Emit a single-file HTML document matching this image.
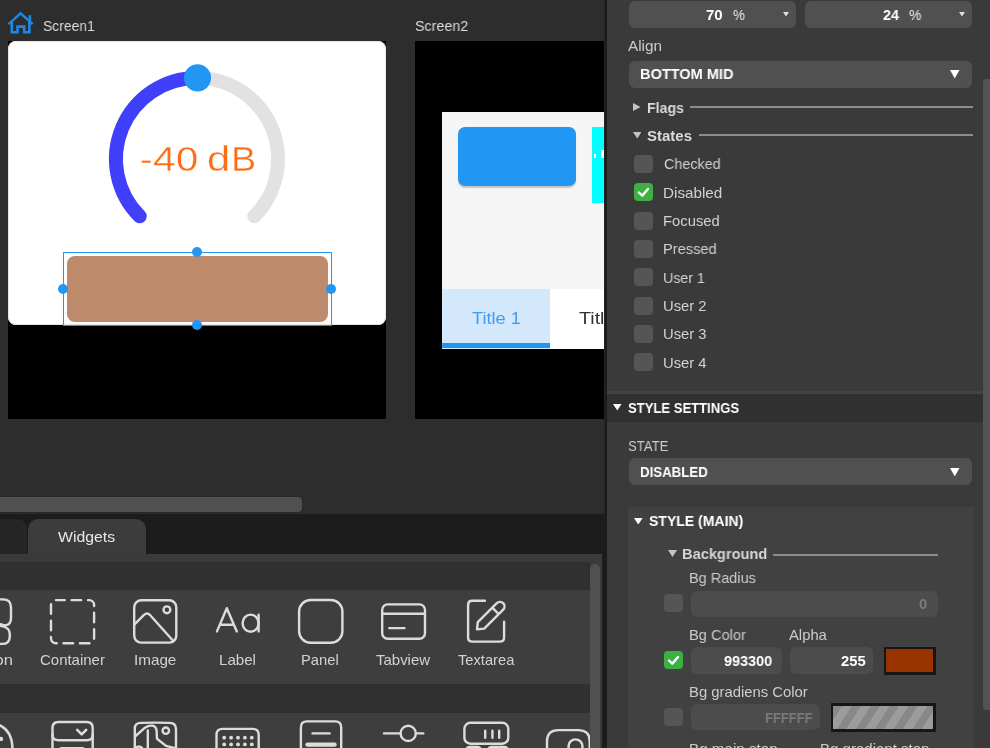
<!DOCTYPE html><html><head><meta charset="utf-8"><style>
html,body{margin:0;padding:0;} *{-webkit-font-smoothing:antialiased;}
body{width:990px;height:748px;overflow:hidden;position:relative;background:#2d2d2d;font-family:'Liberation Sans', sans-serif;} body>div{will-change:transform;}
</style></head><body>
<div style="position:absolute;left:0px;top:0px;width:604px;height:514px;background:#2d2d2d;"></div>
<svg style="position:absolute;left:0;top:0" width="60" height="40"><path d="M9.4 23.4 L20.6 13.4 L31.8 23.4" fill="none" stroke="#1e88e5" stroke-width="2.4" stroke-linecap="square" stroke-linejoin="miter"/><path d="M11.8 21 V32.2 H17.5 V26.6 H24.2 V32.2 H29.4 V21" fill="none" stroke="#1e88e5" stroke-width="2.6" stroke-linecap="butt" stroke-linejoin="miter"/><path d="M29.9 15.2 V21.5" fill="none" stroke="#1e88e5" stroke-width="2.6"/></svg>
<div style="position:absolute;left:43.01px;top:16.47px;line-height:20px;font-size:14.8px;font-weight:400;color:#dcdcdc;white-space:pre;transform:scaleX(0.9380);transform-origin:0 0;">Screen1</div>
<div style="position:absolute;left:415.20px;top:16.37px;line-height:20px;font-size:14.8px;font-weight:400;color:#dcdcdc;white-space:pre;transform:scaleX(0.9641);transform-origin:0 0;">Screen2</div>
<div style="position:absolute;left:8px;top:41px;width:378px;height:378px;background:#000;"></div>
<div style="position:absolute;left:8px;top:41px;width:378px;height:283.5px;background:#fff;border-radius:8px;box-shadow:inset 0 0 0 1px #e4e4e4;"></div>
<svg style="position:absolute;left:0;top:0" width="400" height="330">
<path d="M139.7 216.3 A81 81 0 1 1 254.3 216.3" fill="none" stroke="#e3e1e3" stroke-width="14" stroke-linecap="round"/>
<path d="M139.7 216.3 A81 81 0 0 1 197 78" fill="none" stroke="#4040fa" stroke-width="14" stroke-linecap="round"/>
<circle cx="197.5" cy="77.8" r="13.6" fill="#2196f3"/>
</svg>
<div style="position:absolute;left:140.17px;top:148.67px;line-height:20px;font-size:35px;font-weight:400;color:#ff6c14;white-space:pre;transform:scaleX(1.0899);transform-origin:0 0;-webkit-text-stroke:0.35px #ffffff;">-</div>
<div style="position:absolute;left:153.32px;top:148.67px;line-height:20px;font-size:35px;font-weight:400;color:#ff6c14;white-space:pre;transform:scaleX(1.1718);transform-origin:0 0;-webkit-text-stroke:0.35px #ffffff;">4</div>
<div style="position:absolute;left:175.73px;top:148.67px;line-height:20px;font-size:35px;font-weight:400;color:#ff6c14;white-space:pre;transform:scaleX(1.1403);transform-origin:0 0;-webkit-text-stroke:0.35px #ffffff;">0</div>
<div style="position:absolute;left:207.02px;top:148.67px;line-height:20px;font-size:35px;font-weight:400;color:#ff6c14;white-space:pre;transform:scaleX(1.1873);transform-origin:0 0;-webkit-text-stroke:0.35px #ffffff;">d</div>
<div style="position:absolute;left:230.60px;top:148.67px;line-height:20px;font-size:35px;font-weight:400;color:#ff6c14;white-space:pre;transform:scaleX(1.0792);transform-origin:0 0;-webkit-text-stroke:0.35px #ffffff;">B</div>
<div style="position:absolute;left:67px;top:256px;width:261px;height:66.30000000000001px;background:#be8a6c;border-radius:8px;"></div>
<div style="position:absolute;left:62.9px;top:251.7px;width:269.3px;height:74.30000000000001px;background:transparent;box-sizing:border-box;border:1.7px solid #2196f3;"></div>
<div style="position:absolute;left:192px;top:247.4px;width:10px;height:9.999999999999972px;background:#2196f3;border-radius:50%;"></div>
<div style="position:absolute;left:58.3px;top:284.2px;width:10.0px;height:10.0px;background:#2196f3;border-radius:50%;"></div>
<div style="position:absolute;left:326.1px;top:284.2px;width:10.0px;height:10.0px;background:#2196f3;border-radius:50%;"></div>
<div style="position:absolute;left:192px;top:320.3px;width:10px;height:10.0px;background:#2196f3;border-radius:50%;"></div>
<div style="position:absolute;left:415px;top:41px;width:189px;height:378px;background:#000;"></div>
<div style="position:absolute;left:442.4px;top:111.8px;width:161.60000000000002px;height:236.39999999999998px;background:#f5f5f5;"></div>
<div style="position:absolute;left:458.2px;top:127px;width:118.19999999999999px;height:58.80000000000001px;background:#2196f3;border-radius:7px;box-shadow:0 1.5px 1px #c8c8c8;"></div>
<div style="position:absolute;left:591.5px;top:127px;width:12.5px;height:75.69999999999999px;background:#00ffff;"></div>
<div style="position:absolute;left:594px;top:154px;width:2px;height:4px;background:#fff;"></div>
<div style="position:absolute;left:600.5px;top:150px;width:2.5px;height:8px;background:#fff;"></div>
<div style="position:absolute;left:442.4px;top:288.7px;width:107.60000000000002px;height:59.5px;background:#d4e8fc;"></div>
<div style="position:absolute;left:550px;top:288.7px;width:54px;height:59.5px;background:#ffffff;"></div>
<div style="position:absolute;left:442.4px;top:343.3px;width:107.60000000000002px;height:4.899999999999977px;background:#2196f3;"></div>
<div style="position:absolute;left:471.60px;top:308.61px;line-height:20px;font-size:17px;font-weight:400;color:#3d9cf0;white-space:pre;transform:scaleX(1.0674);transform-origin:0 0;">Title 1</div>
<div style="position:absolute;left:578.57px;top:308.61px;line-height:20px;font-size:17px;font-weight:400;color:#333333;white-space:pre;transform:scaleX(1.1561);transform-origin:0 0;">Titl</div>
<div style="position:absolute;left:0px;top:497px;width:302px;height:14.75px;background:#505050;border-radius:0 4px 4px 0;box-shadow:0 0 0 1px #272727;"></div>
<div style="position:absolute;left:604px;top:0px;width:3px;height:748px;background:#1c1c1c;background:linear-gradient(90deg,#242424 0,#242424 1px,#1c1c1c 1px);"></div>
<div style="position:absolute;left:0px;top:514px;width:604.5px;height:234px;background:#1c1c1c;"></div>
<div style="position:absolute;left:0px;top:519px;width:27px;height:34.60000000000002px;background:#262626;border-radius:0 10px 0 0;"></div>
<div style="position:absolute;left:28px;top:519px;width:118px;height:34.60000000000002px;background:#3c3c3c;border-radius:10px 10px 0 0;"></div>
<div style="position:absolute;left:58.37px;top:527.07px;line-height:20px;font-size:14.8px;font-weight:400;color:#e8e8e8;white-space:pre;transform:scaleX(1.0679);transform-origin:0 0;">Widgets</div>
<div style="position:absolute;left:0px;top:553.6px;width:602px;height:194.39999999999998px;background:#3a3a3a;"></div>
<div style="position:absolute;left:0px;top:562px;width:590px;height:28px;background:#303030;"></div>
<div style="position:absolute;left:0px;top:590px;width:590px;height:94px;background:#3e3e3e;"></div>
<div style="position:absolute;left:0px;top:684px;width:590px;height:28.700000000000045px;background:#303030;"></div>
<div style="position:absolute;left:0px;top:712.7px;width:590px;height:35.299999999999955px;background:#3e3e3e;"></div>
<div style="position:absolute;left:590px;top:564px;width:10.200000000000045px;height:184px;background:#505050;border-radius:5px 5px 0 0;"></div>
<div style="position:absolute;left:607px;top:0px;width:383px;height:748px;background:#3a3a3a;"></div>
<div style="position:absolute;left:983px;top:78.7px;width:13px;height:630.8px;background:#535353;border-radius:3px;"></div>
<div style="position:absolute;left:629px;top:1.2px;width:167px;height:26.8px;background:#505050;border-radius:6px;"></div>
<div style="position:absolute;left:805px;top:1.2px;width:167px;height:26.8px;background:#505050;border-radius:6px;"></div>
<div style="position:absolute;left:706.36px;top:5.47px;line-height:20px;font-size:14.8px;font-weight:700;color:#ffffff;white-space:pre;transform:scaleX(1.0164);transform-origin:0 0;">70</div>
<div style="position:absolute;left:733.15px;top:5.47px;line-height:20px;font-size:14.8px;font-weight:400;color:#ececec;white-space:pre;transform:scaleX(0.8990);transform-origin:0 0;">%</div>
<svg style="position:absolute;left:782.5px;top:12px" width="6.0" height="4.5"><path d="M0 0 H6.0 L3.0 4.5 Z" fill="#e0e0e0"/></svg>
<div style="position:absolute;left:883.11px;top:5.47px;line-height:20px;font-size:14.8px;font-weight:700;color:#ffffff;white-space:pre;transform:scaleX(0.9701);transform-origin:0 0;">24</div>
<div style="position:absolute;left:909.13px;top:5.47px;line-height:20px;font-size:14.8px;font-weight:400;color:#ececec;white-space:pre;transform:scaleX(0.9402);transform-origin:0 0;">%</div>
<svg style="position:absolute;left:958.5px;top:12px" width="6.0" height="4.5"><path d="M0 0 H6.0 L3.0 4.5 Z" fill="#e0e0e0"/></svg>
<div style="position:absolute;left:628.00px;top:35.77px;line-height:20px;font-size:14.8px;font-weight:400;color:#cccccc;white-space:pre;transform:scaleX(1.0353);transform-origin:0 0;">Align</div>
<div style="position:absolute;left:629px;top:60.5px;width:343px;height:26.5px;background:#505050;border-radius:6px;"></div>
<div style="position:absolute;left:639.82px;top:64.07px;line-height:20px;font-size:14.8px;font-weight:700;color:#ffffff;white-space:pre;transform:scaleX(0.9826);transform-origin:0 0;">BOTTOM MID</div>
<svg style="position:absolute;left:950px;top:70px" width="9.5" height="8.5"><path d="M0 0 H9.5 L4.75 8.5 Z" fill="#ffffff"/></svg>
<svg style="position:absolute;left:633px;top:103px" width="7.5" height="8"><path d="M0 0 L7.5 4.0 L0 8 Z" fill="#c4c4c4"/></svg>
<div style="position:absolute;left:646.65px;top:97.57px;line-height:20px;font-size:14.8px;font-weight:700;color:#dadada;white-space:pre;transform:scaleX(0.9541);transform-origin:0 0;">Flags</div>
<div style="position:absolute;left:690px;top:106px;width:283px;height:1.5999999999999943px;background:#8c8c8c;"></div>
<svg style="position:absolute;left:632.5px;top:132px" width="8.5" height="6.5"><path d="M0 0 H8.5 L4.25 6.5 Z" fill="#c4c4c4"/></svg>
<div style="position:absolute;left:647.09px;top:125.67px;line-height:20px;font-size:14.8px;font-weight:700;color:#dadada;white-space:pre;transform:scaleX(1.0127);transform-origin:0 0;">States</div>
<div style="position:absolute;left:699px;top:134.2px;width:274px;height:1.6000000000000227px;background:#8c8c8c;"></div>
<div style="position:absolute;left:634px;top:154.8px;width:19px;height:18.0px;background:#555555;border-radius:4px;"></div>
<div style="position:absolute;left:663.57px;top:154.27px;line-height:20px;font-size:14.8px;font-weight:400;color:#d2d2d2;white-space:pre;transform:scaleX(0.9681);transform-origin:0 0;">Checked</div>
<div style="position:absolute;left:634px;top:183.16000000000003px;width:19px;height:18.0px;background:#3cb043;border-radius:4px;"></div>
<svg style="position:absolute;left:634px;top:183.16000000000003px" width="19" height="18"><path d="M5 9.5 L8.3 12.6 L14 6" fill="none" stroke="#fff" stroke-width="2.4" stroke-linecap="round" stroke-linejoin="round"/></svg>
<div style="position:absolute;left:663.01px;top:182.63px;line-height:20px;font-size:14.8px;font-weight:400;color:#d2d2d2;white-space:pre;transform:scaleX(1.0299);transform-origin:0 0;">Disabled</div>
<div style="position:absolute;left:634px;top:211.52px;width:19px;height:18.0px;background:#555555;border-radius:4px;"></div>
<div style="position:absolute;left:663.06px;top:210.99px;line-height:20px;font-size:14.8px;font-weight:400;color:#d2d2d2;white-space:pre;transform:scaleX(0.9913);transform-origin:0 0;">Focused</div>
<div style="position:absolute;left:634px;top:239.88px;width:19px;height:18.0px;background:#555555;border-radius:4px;"></div>
<div style="position:absolute;left:663.06px;top:239.35px;line-height:20px;font-size:14.8px;font-weight:400;color:#d2d2d2;white-space:pre;transform:scaleX(0.9889);transform-origin:0 0;">Pressed</div>
<div style="position:absolute;left:634px;top:268.24px;width:19px;height:18.0px;background:#555555;border-radius:4px;"></div>
<div style="position:absolute;left:663.22px;top:267.71px;line-height:20px;font-size:14.8px;font-weight:400;color:#d2d2d2;white-space:pre;transform:scaleX(0.9610);transform-origin:0 0;">User 1</div>
<div style="position:absolute;left:634px;top:296.6px;width:19px;height:18.0px;background:#555555;border-radius:4px;"></div>
<div style="position:absolute;left:663.18px;top:296.07px;line-height:20px;font-size:14.8px;font-weight:400;color:#d2d2d2;white-space:pre;transform:scaleX(0.9946);transform-origin:0 0;">User 2</div>
<div style="position:absolute;left:634px;top:324.96000000000004px;width:19px;height:18.0px;background:#555555;border-radius:4px;"></div>
<div style="position:absolute;left:663.18px;top:324.43px;line-height:20px;font-size:14.8px;font-weight:400;color:#d2d2d2;white-space:pre;transform:scaleX(0.9916);transform-origin:0 0;">User 3</div>
<div style="position:absolute;left:634px;top:353.32px;width:19px;height:18.0px;background:#555555;border-radius:4px;"></div>
<div style="position:absolute;left:663.18px;top:352.79px;line-height:20px;font-size:14.8px;font-weight:400;color:#d2d2d2;white-space:pre;transform:scaleX(0.9958);transform-origin:0 0;">User 4</div>
<div style="position:absolute;left:607px;top:390.8px;width:376px;height:3.0px;background:#434343;"></div>
<div style="position:absolute;left:607px;top:393.8px;width:376px;height:27.899999999999977px;background:#303030;"></div>
<svg style="position:absolute;left:613px;top:404px" width="8.5" height="6.5"><path d="M0 0 H8.5 L4.25 6.5 Z" fill="#ffffff"/></svg>
<div style="position:absolute;left:628.36px;top:397.97px;line-height:20px;font-size:14.8px;font-weight:700;color:#ffffff;white-space:pre;transform:scaleX(0.8829);transform-origin:0 0;">STYLE SETTINGS</div>
<div style="position:absolute;left:628.24px;top:435.97px;line-height:20px;font-size:14.8px;font-weight:400;color:#cccccc;white-space:pre;transform:scaleX(0.8907);transform-origin:0 0;">STATE</div>
<div style="position:absolute;left:629px;top:458px;width:343px;height:26.5px;background:#505050;border-radius:6px;"></div>
<div style="position:absolute;left:640.00px;top:461.87px;line-height:20px;font-size:14.8px;font-weight:700;color:#ffffff;white-space:pre;transform:scaleX(0.8963);transform-origin:0 0;">DISABLED</div>
<svg style="position:absolute;left:950px;top:467.5px" width="9.5" height="8.5"><path d="M0 0 H9.5 L4.75 8.5 Z" fill="#ffffff"/></svg>
<div style="position:absolute;left:628px;top:506.6px;width:346px;height:241.39999999999998px;background:#414141;"></div>
<svg style="position:absolute;left:634px;top:517.6px" width="8.600000000000023" height="6.600000000000023"><path d="M0 0 H8.600000000000023 L4.300000000000011 6.600000000000023 Z" fill="#ffffff"/></svg>
<div style="position:absolute;left:649.13px;top:511.37px;line-height:20px;font-size:14.8px;font-weight:700;color:#ffffff;white-space:pre;transform:scaleX(0.9480);transform-origin:0 0;">STYLE (MAIN)</div>
<svg style="position:absolute;left:667.5px;top:550px" width="9.0" height="7"><path d="M0 0 H9.0 L4.5 7 Z" fill="#c4c4c4"/></svg>
<div style="position:absolute;left:682.01px;top:544.47px;line-height:20px;font-size:14.8px;font-weight:700;color:#d6d6d6;white-space:pre;transform:scaleX(0.9881);transform-origin:0 0;">Background</div>
<div style="position:absolute;left:773px;top:553.5px;width:165px;height:1.5px;background:#8c8c8c;"></div>
<div style="position:absolute;left:689.28px;top:568.47px;line-height:20px;font-size:14.8px;font-weight:400;color:#cccccc;white-space:pre;transform:scaleX(0.9796);transform-origin:0 0;">Bg Radius</div>
<div style="position:absolute;left:664px;top:594.4px;width:19.299999999999955px;height:18.100000000000023px;background:#555555;border-radius:4px;"></div>
<div style="position:absolute;left:690.5px;top:591px;width:246.5px;height:26px;background:#4c4c4c;border-radius:6px;"></div>
<div style="position:absolute;left:919.38px;top:594.47px;line-height:20px;font-size:14.8px;font-weight:700;color:#7a7a7a;white-space:pre;transform:scaleX(1.0000);transform-origin:0 0;">0</div>
<div style="position:absolute;left:689.27px;top:625.07px;line-height:20px;font-size:14.8px;font-weight:400;color:#cccccc;white-space:pre;transform:scaleX(0.9879);transform-origin:0 0;">Bg Color</div>
<div style="position:absolute;left:789.10px;top:625.07px;line-height:20px;font-size:14.8px;font-weight:400;color:#cccccc;white-space:pre;transform:scaleX(0.9907);transform-origin:0 0;">Alpha</div>
<div style="position:absolute;left:664px;top:651px;width:19.299999999999955px;height:18px;background:#3cb043;border-radius:4px;"></div>
<svg style="position:absolute;left:664px;top:651px" width="19" height="18"><path d="M5 9.5 L8.3 12.6 L14 6" fill="none" stroke="#fff" stroke-width="2.4" stroke-linecap="round" stroke-linejoin="round"/></svg>
<div style="position:absolute;left:690.5px;top:647.2px;width:90.5px;height:26.59999999999991px;background:#4c4c4c;border-radius:6px;"></div>
<div style="position:absolute;left:724.01px;top:650.67px;line-height:20px;font-size:14.8px;font-weight:700;color:#ffffff;white-space:pre;transform:scaleX(0.9725);transform-origin:0 0;">993300</div>
<div style="position:absolute;left:790px;top:647.2px;width:83px;height:26.59999999999991px;background:#4c4c4c;border-radius:6px;"></div>
<div style="position:absolute;left:840.50px;top:650.67px;line-height:20px;font-size:14.8px;font-weight:700;color:#ffffff;white-space:pre;transform:scaleX(0.9905);transform-origin:0 0;">255</div>
<div style="position:absolute;left:883.5px;top:646.5px;width:52.0px;height:28.200000000000045px;background:#161616;border-radius:1px;"></div>
<div style="position:absolute;left:886px;top:649px;width:47px;height:23px;background:#993300;"></div>
<div style="position:absolute;left:689.25px;top:682.17px;line-height:20px;font-size:14.8px;font-weight:400;color:#cccccc;white-space:pre;transform:scaleX(1.0026);transform-origin:0 0;">Bg gradiens Color</div>
<div style="position:absolute;left:664px;top:708px;width:19.299999999999955px;height:17.799999999999955px;background:#555555;border-radius:4px;"></div>
<div style="position:absolute;left:690.8px;top:704px;width:129.20000000000005px;height:26.399999999999977px;background:#4c4c4c;border-radius:6px;"></div>
<div style="position:absolute;left:765.12px;top:707.57px;line-height:20px;font-size:14.8px;font-weight:700;color:#7a7a7a;white-space:pre;transform:scaleX(0.8762);transform-origin:0 0;">FFFFFF</div>
<div style="position:absolute;left:831px;top:702.7px;width:104.5px;height:28.799999999999955px;background:#161616;border-radius:1px;"></div>
<div style="position:absolute;left:833px;top:705.6px;width:100.29999999999995px;height:23.0px;background:repeating-linear-gradient(123deg,#888888 0px,#888888 7.65px,#9c9c9c 7.65px,#9c9c9c 15.85px);"></div>
<div style="position:absolute;left:689.22px;top:738.87px;line-height:20px;font-size:14.8px;font-weight:400;color:#cccccc;white-space:pre;transform:scaleX(1.0267);transform-origin:0 0;">Bg main stop</div>
<div style="position:absolute;left:820.43px;top:738.87px;line-height:20px;font-size:14.8px;font-weight:400;color:#cccccc;white-space:pre;transform:scaleX(1.0159);transform-origin:0 0;">Bg gradient stop</div>
<div style="position:absolute;left:0;top:553.6px;width:590px;height:195px;overflow:hidden">
<div style="position:absolute;left:-35.40px;top:95.87px;line-height:20px;font-size:14.8px;font-weight:400;color:#d2d2d2;white-space:pre;transform:scaleX(1.1235);transform-origin:0 0;">Button</div>
<div style="position:absolute;left:39.64px;top:95.87px;line-height:20px;font-size:14.8px;font-weight:400;color:#d2d2d2;white-space:pre;transform:scaleX(1.0115);transform-origin:0 0;">Container</div>
<div style="position:absolute;left:133.59px;top:95.87px;line-height:20px;font-size:14.8px;font-weight:400;color:#d2d2d2;white-space:pre;transform:scaleX(1.0289);transform-origin:0 0;">Image</div>
<div style="position:absolute;left:218.72px;top:95.87px;line-height:20px;font-size:14.8px;font-weight:400;color:#d2d2d2;white-space:pre;transform:scaleX(1.0214);transform-origin:0 0;">Label</div>
<div style="position:absolute;left:301.35px;top:95.87px;line-height:20px;font-size:14.8px;font-weight:400;color:#d2d2d2;white-space:pre;transform:scaleX(0.9972);transform-origin:0 0;">Panel</div>
<div style="position:absolute;left:376.12px;top:95.87px;line-height:20px;font-size:14.8px;font-weight:400;color:#d2d2d2;white-space:pre;transform:scaleX(1.0118);transform-origin:0 0;">Tabview</div>
<div style="position:absolute;left:457.63px;top:95.87px;line-height:20px;font-size:14.8px;font-weight:400;color:#d2d2d2;white-space:pre;transform:scaleX(0.9920);transform-origin:0 0;">Textarea</div>
<svg style="position:absolute;left:0;top:0" width="590" height="195" viewBox="0 553.6 590 195">
<g fill="none" stroke="#dcdcdc" stroke-width="2.4" stroke-linecap="round" stroke-linejoin="round">
<!-- button partial -->
<path d="M-20 599 H3 Q11 599 11 607 V617 Q11 626 3 624.5 Q-4 622.5 -20 623"/>
<path d="M-20 624 Q-4 624 3 626 Q9.8 627.5 9.8 634 V636 Q9.8 643.5 2 643.5 H-20"/>
<!-- container dashed -->
<path d="M56 599.7 H89.1 A5 5 0 0 1 94.1 604.7 V637.9 A5 5 0 0 1 89.1 642.9 H56 A5 5 0 0 1 51 637.9 V604.7 A5 5 0 0 1 56 599.7 Z" stroke-dasharray="9.6 6.8" stroke-dashoffset="0.8"/>
<!-- image -->
<rect x="134.2" y="599.9" width="42.1" height="42.3" rx="7"/>
<path d="M134.5 624 L144 614.5 Q147 611.8 150 614.6 L173.3 640.6"/>
<circle cx="166.9" cy="609.4" r="3.4"/>
<!-- Aa -->
<path d="M217 631 L226.8 607.8 L236.8 631 M220.3 624.3 H233.4"/>
<ellipse cx="250.6" cy="622.8" rx="8" ry="8.6"/>
<path d="M258.6 614.3 V631"/>
<!-- panel -->
<rect x="299.1" y="599.6" width="43.3" height="42.8" rx="11.5"/>
<!-- tabview -->
<rect x="382.2" y="604" width="42.8" height="34.4" rx="5.5"/>
<path d="M382.5 613.4 H424.7 M389.3 627.7 H404.5"/>
<!-- textarea -->
<path d="M485 600.4 H472.3 Q468.1 600.4 468.1 604.6 V637 Q468.1 641.2 472.3 641.2 H499.9 Q504.1 641.2 504.1 637 V621.3"/>
<path d="M477.8 621.8 L496.8 602.8 A4.5 4.5 0 0 1 503.2 609.2 L484.2 628.2 L477 629 Z M492.3 607.3 L498.7 613.7"/>
<!-- row 2: colorwheel partial -->
<path d="M-12 722 Q12 724 12.5 748"/>
<circle cx="1" cy="738.5" r="2.2" fill="#dcdcdc" stroke="none"/>
<!-- dropdown -->
<path d="M52.5 760 V727.6 Q52.5 721.6 58.5 721.6 H86.7 Q92.7 721.6 92.7 727.6 V760"/>
<path d="M52.5 734 Q52.5 739.8 58.5 739.8 H86.7 Q92.7 739.8 92.7 734"/>
<path d="M77.2 729.5 L81.7 734 L86.2 729.5" stroke-width="2.6"/>
<path d="M61 748 H83" stroke-width="3"/>
<!-- imgbutton -->
<path d="M134.8 760 V728 Q134.8 722.6 141 722.5 Q155 722 170 722.5 Q176 722.8 176 729 V760"/>
<circle cx="165.8" cy="730.3" r="3.2"/>
<path d="M135.6 735.6 L145 727.3 Q148.5 724.8 152.5 725.3 Q156.5 726.2 156.6 730.8 L157 738.3 L166 745.5 L176 748"/>
<path d="M147.8 730 V760"/>
<path d="M135 748 Q139 744.5 142 747.5"/>
<!-- keyboard -->
<path d="M216.5 760 V734.5 Q216.5 728.5 222.5 728.5 H252.7 Q258.7 728.5 258.7 734.5 V760"/>
<!-- list-like -->
<path d="M300.9 760 V727 Q300.9 721 306.9 721 H335.2 Q341.2 721 341.2 727 V760"/>
<path d="M312.6 733 H329.6"/>
<path d="M307.5 744.2 H334.5" stroke-width="4.4"/>
<!-- slider -->
<path d="M384 733 H400 M416.4 733 H423.3"/>
<circle cx="408.2" cy="733" r="7.6"/>
<!-- roller/spinbox -->
<rect x="464.4" y="722.4" width="43.9" height="20.9" rx="6"/>
<path d="M485.2 730.3 V737.3 M492.4 730.3 V737.3 M499.2 730.3 V737.3"/>
<path d="M466.5 752 V750 Q466.5 746.5 470 746.5 H477 Q480.5 746.5 480.5 750 V752 M488.5 752 V750 Q488.5 746.5 492 746.5 H504 Q507.5 746.5 507.5 750 V752"/>
<!-- switch -->
<path d="M547 760 V741 Q547 729.7 558.3 729.7 H578.5 Q589.7 729.7 589.7 741 V760"/>
<circle cx="575.5" cy="746" r="7"/>
</g>
<circle cx="224.2" cy="737.3" r="1.9" fill="#dcdcdc"/><circle cx="231.1" cy="737.3" r="1.9" fill="#dcdcdc"/><circle cx="238.0" cy="737.3" r="1.9" fill="#dcdcdc"/><circle cx="244.9" cy="737.3" r="1.9" fill="#dcdcdc"/><circle cx="251.8" cy="737.3" r="1.9" fill="#dcdcdc"/><circle cx="224.2" cy="744.0" r="1.9" fill="#dcdcdc"/><circle cx="231.1" cy="744.0" r="1.9" fill="#dcdcdc"/><circle cx="238.0" cy="744.0" r="1.9" fill="#dcdcdc"/><circle cx="244.9" cy="744.0" r="1.9" fill="#dcdcdc"/><circle cx="251.8" cy="744.0" r="1.9" fill="#dcdcdc"/></svg>
</div>

</body></html>
